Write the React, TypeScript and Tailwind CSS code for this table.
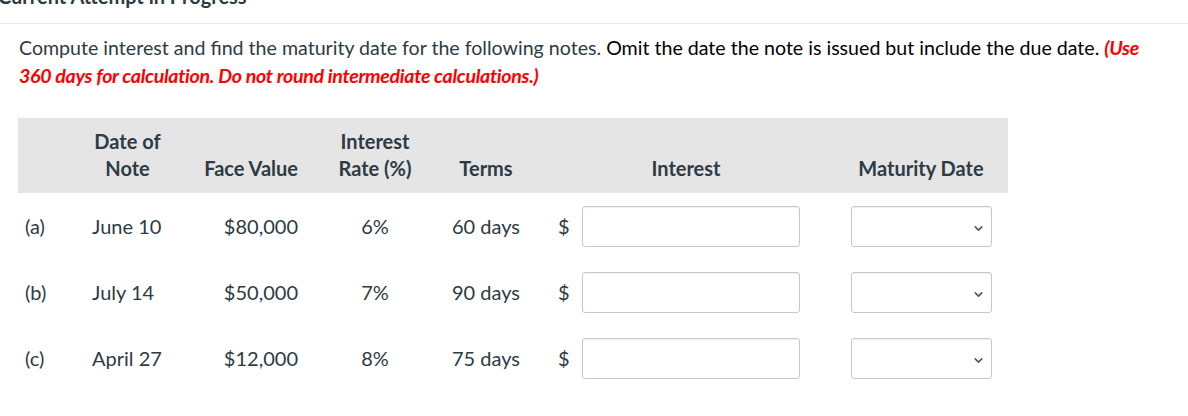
import React from 'react';
import { ChevronDown } from 'lucide-react';

interface NoteRow {
  label: string;
  date: string;
  face: string;
  rate: string;
  terms: string;
}

const ROWS: NoteRow[] = [
  { label: '(a)', date: 'June 10', face: '$80,000', rate: '6%', terms: '60 days' },
  { label: '(b)', date: 'July 14', face: '$50,000', rate: '7%', terms: '90 days' },
  { label: '(c)', date: 'April 27', face: '$12,000', rate: '8%', terms: '75 days' },
];

const cols = 'grid grid-cols-[57px_105px_130px_130px_92px_298px_178px]';

const App: React.FC = () => {
  return (
    <div className="w-[1188px] h-[416px] bg-white overflow-hidden text-[#2d3b45] font-['Lato','Liberation_Sans',sans-serif]">
      {/* Cut-off title */}
      <div className="h-[24px] overflow-hidden border-b border-[#e6e6e6]">
        <div className="mt-[-16px] ml-[-2px] text-[20px] leading-[24px] font-bold">Current Attempt in Progress</div>
      </div>

      {/* Instructions */}
      <p className="pl-[19px] pr-[20px] pt-[10px] text-[19.6px] leading-[28px]">
        Compute interest and find the maturity date for the following notes.{' '}
        <span className="text-black">Omit the date the note is issued but include the due date.</span>{' '}
        <span className="text-[#f00] font-bold italic tracking-[-0.3px]">
          (Use 360 days for calculation. Do not round intermediate calculations.)
        </span>
      </p>

      {/* Table */}
      <div className="ml-[18px] mt-[28px] w-[990px] text-[20px] leading-[27px]">
        <div className={`${cols} items-end bg-[#e5e5e5] h-[75px] pb-[11px] font-bold`}>
          <div />
          <div className="text-center">
            Date of
            <br />
            Note
          </div>
          <div className="text-right pr-[12px]">Face Value</div>
          <div className="text-center">
            Interest
            <br />
            Rate (%)
          </div>
          <div className="text-center">Terms</div>
          <div className="text-center pl-[10px]">Interest</div>
          <div className="text-center pl-[4px]">Maturity Date</div>
        </div>

        {ROWS.map(row => (
          <div key={row.label} className={`${cols} items-center h-[66px]`}>
            <div className="pl-[7px]">{row.label}</div>
            <div className="pl-[17px]">{row.date}</div>
            <div className="text-right pr-[12px]">{row.face}</div>
            <div className="text-center">{row.rate}</div>
            <div className="text-center">{row.terms}</div>
            <div className="flex items-center pl-[25px]">
              <span className="w-[25px] pl-[1px]">$</span>
              <input
                type="text"
                className="w-[218px] h-[41px] border border-[#c8c8c8] rounded-[3px] bg-white shadow-[inset_0_1px_1px_rgba(0,0,0,0.06)] outline-none"
              />
            </div>
            <div className="pl-[21px]">
              <div className="relative w-[141px] h-[41px] border border-[#c8c8c8] rounded-[3px] bg-white shadow-[inset_0_1px_1px_rgba(0,0,0,0.06)]">
                <ChevronDown
                  size={13}
                  strokeWidth={3}
                  className="absolute right-[6px] top-[15px] text-[#555]"
                />
              </div>
            </div>
          </div>
        ))}
      </div>
    </div>
  );
};

export default App;
